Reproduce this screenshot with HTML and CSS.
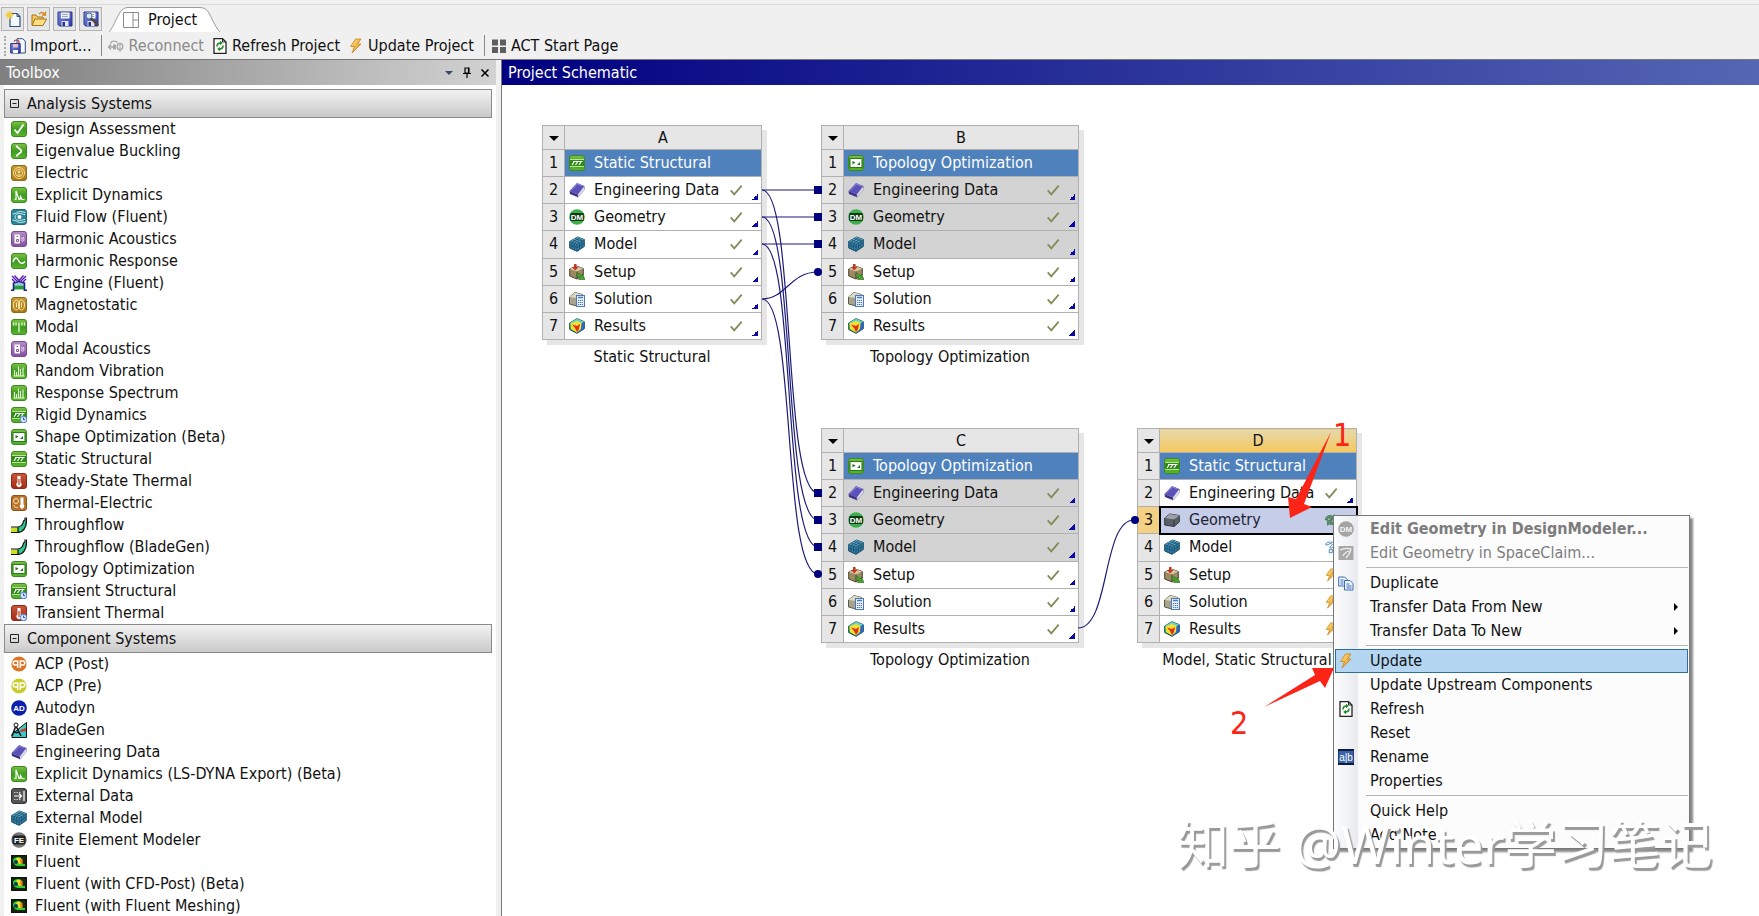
FILE: index.html
```
<!DOCTYPE html>
<html lang="en">
<head>
    <meta charset="UTF-8">
    <meta name="viewport" content="width=device-width, initial-scale=1.0">
    <title>Project Schematic</title>
    <link rel="stylesheet" href="styles.css">
</head>
<body>
    <!-- icon sprite -->
    <svg class="sprite" xmlns="http://www.w3.org/2000/svg">
        <defs>
            <linearGradient id="gGreen" x1="0" y1="0" x2="0" y2="1"><stop offset="0" stop-color="#7cc243"/><stop offset=".5" stop-color="#3f9c22"/><stop offset="1" stop-color="#5db52c"/></linearGradient>
            <linearGradient id="gGold" x1="0" y1="0" x2="0" y2="1"><stop offset="0" stop-color="#c79a3c"/><stop offset="1" stop-color="#a97a14"/></linearGradient>
            <linearGradient id="gRed" x1="0" y1="0" x2="0" y2="1"><stop offset="0" stop-color="#c9583c"/><stop offset="1" stop-color="#a32c16"/></linearGradient>
            <linearGradient id="gPurple" x1="0" y1="0" x2="0" y2="1"><stop offset="0" stop-color="#b58cc6"/><stop offset="1" stop-color="#8450a0"/></linearGradient>
            <linearGradient id="gBolt" x1="0" y1="0" x2="1" y2="1"><stop offset="0" stop-color="#ffe680"/><stop offset="1" stop-color="#e08a1a"/></linearGradient>
            <linearGradient id="gFloppy" x1="0" y1="0" x2="1" y2="1"><stop offset="0" stop-color="#7d8fe8"/><stop offset="1" stop-color="#2b3a9e"/></linearGradient>
        </defs>
        <symbol id="green" viewBox="0 0 16 16"><rect x=".5" y=".5" width="15" height="15" rx="2.5" fill="url(#gGreen)" stroke="#3c8a22"/></symbol>
        <symbol id="clock" viewBox="0 0 16 16"><circle cx="12.5" cy="12.5" r="3.2" fill="#dfeaff" stroke="#4f7fd8"/><path d="M12.5 10.6v2h1.6" fill="none" stroke="#2550b0"/></symbol>
        <symbol id="assess" viewBox="0 0 16 16"><use href="#green"/><path d="M3.5 8.5l3 3.5 6-8.5" fill="none" stroke="#fff" stroke-width="1.8"/></symbol>
        <symbol id="buckling" viewBox="0 0 16 16"><use href="#green"/><path d="M5.5 2.5c.5 3 5 3.500 5 5.500s-4.500 2.500-5 5.500" fill="none" stroke="#fff" stroke-width="1.7"/></symbol>
        <symbol id="electric" viewBox="0 0 16 16"><rect x=".5" y=".5" width="15" height="15" rx="2.500" fill="url(#gGold)" stroke="#8d6a1c"/><circle cx="8" cy="8" r="5.500" fill="none" stroke="#f7dc84"/><circle cx="8" cy="8" r="3.600" fill="#b98a26" stroke="#f7dc84"/><path d="M8 5.500v3M6.500 7h3M6.500 10h3" stroke="#fff3c0"/></symbol>
        <symbol id="explicit" viewBox="0 0 16 16"><use href="#green"/><path d="M3.500 12.500h1.500V4l3 8.500h1l.500-3 1.500 3h2.500" fill="none" stroke="#fff" stroke-width="1.200"/></symbol>
        <symbol id="fluid" viewBox="0 0 16 16"><rect x=".5" y=".5" width="15" height="15" rx="2.500" fill="#2a8496" stroke="#1d6a7a"/><path d="M1.500 5c4 0 4-2.500 8-2.500 2 0 3 1 5 1M1.500 11c4 0 4 2.500 8 2.500 2 0 3-1 5-1M4 8c0-2 2-3.500 4.500-3.500 2 0 3 1 5.500 1M4 8c0 2 2 3.500 4.500 3.500 2 0 3-1 5.500-1" fill="none" stroke="#c8f0f4"/><circle cx="8.500" cy="8" r="2" fill="#fff"/></symbol>
        <symbol id="acoustic" viewBox="0 0 16 16"><rect x=".5" y=".5" width="15" height="15" rx="2.500" fill="url(#gPurple)" stroke="#7a4a92"/><rect x="3.500" y="3.500" width="5.500" height="9" fill="#fff"/><path d="M5.500 5.500h1.500M5.500 8.500h2v2h-2z" stroke="#8a58a6" fill="none"/><path d="M11 6v4.500M12 6c1.300 1.500 1.300 3 0 4.500" fill="none" stroke="#f0dcf8"/></symbol>
        <symbol id="harmonic" viewBox="0 0 16 16"><use href="#green"/><path d="M2 9c1.500-5 4-5 5.500-1.500S12 11 14 8.500" fill="none" stroke="#fff" stroke-width="1.500"/></symbol>
        <symbol id="icengine" viewBox="0 0 16 16"><path d="M2 8h12v7H2z" fill="#fff"/><path d="M3 7.500h10v3H3z" fill="#8fc8e8"/><path d="M3 10.500h10v4H3z" fill="#2a9c3a"/><path d="M0 15.200h2.500V8L8 6.500 13.500 8v7.200H16" fill="none" stroke="#20208a" stroke-width="1.600"/><path d="M1 1l5.500 5.500M3.500.5L8 5.500M1 4l3 3M15 1L9.500 6.500M12.500.5L8 5.500M15 4l-3 3" stroke="#5a1ab0" stroke-width="1.400"/></symbol>
        <symbol id="magneto" viewBox="0 0 16 16"><rect x=".5" y=".5" width="15" height="15" rx="2.500" fill="url(#gGold)" stroke="#8d6a1c"/><g fill="none" stroke="#fbe9a8"><ellipse cx="5.500" cy="8" rx="3" ry="5"/><ellipse cx="10.500" cy="8" rx="3" ry="5"/><path d="M5.500 5.500v5M10.500 5.500v5M8 4v8"/></g></symbol>
        <symbol id="modal" viewBox="0 0 16 16"><use href="#green"/><path d="M2.500 3.500v3M5 3.500v3M8 3.500v9.500M11 3.500v3M13.500 3.500v3" stroke="#e8ffd8" stroke-width="1.300"/></symbol>
        <symbol id="spectrum" viewBox="0 0 16 16"><use href="#green"/><path d="M3.500 7v6M5.500 9v4M7.500 3.500v9.500M9.500 6v7M12 4.500v8.500" stroke="#e8ffd8" stroke-width="1.100"/><path d="M2.500 13h11" stroke="#e8ffd8"/></symbol>
        <symbol id="static" viewBox="0 0 16 16"><use href="#green"/><rect x="1" y="4.500" width="14" height="7" fill="#2f8a1c"/><path d="M1 4.500h14M1 11.500h14" stroke="#b9e88c"/><path d="M3 10l2-3M6.500 10l2-3M10 10l2-3M4 6.500h9.500" stroke="#fff" stroke-width="1.200"/></symbol>
        <symbol id="rigid" viewBox="0 0 16 16"><use href="#static"/><use href="#clock"/></symbol>
        <symbol id="topology" viewBox="0 0 16 16"><use href="#green"/><rect x="2.500" y="4" width="11" height="8" fill="#fff" stroke="#e6f6da"/><path d="M4.500 6l3 1.500-3 2zM9 10h3V7z" fill="#2c6b2c"/><rect x="2" y="3.500" width="12" height="9" fill="none" stroke="#2c7a1c"/></symbol>
        <symbol id="thermal" viewBox="0 0 16 16"><rect x=".5" y=".5" width="15" height="15" rx="2.500" fill="url(#gRed)" stroke="#8e2a16"/><path d="M6.500 3h3v6.500a2.500 2.500 0 1 1-3 0z" fill="#fff"/><path d="M8 6v6" stroke="#b03a20" stroke-width="1.200"/></symbol>
        <symbol id="transthermal" viewBox="0 0 16 16"><use href="#thermal"/><use href="#clock"/></symbol>
        <symbol id="thermelec" viewBox="0 0 16 16"><rect x=".5" y=".5" width="15" height="15" rx="2.500" fill="#b8742c" stroke="#8e5418"/><path d="M9.500 2.500h3v7a2.300 2.300 0 1 1-3 0z" fill="#fff"/><circle cx="5" cy="6" r="2.500" fill="none" stroke="#ffe2b0"/><path d="M3 10c0 3 3 3 4 2" fill="none" stroke="#ffe2b0"/></symbol>
        <symbol id="throughflow" viewBox="0 0 16 16"><path d="M0 10.500h7v5H0z" fill="#c8e020"/><path d="M7 10.500c3-.5 5-3 5.500-7H16c0 7-3 11-9 12z" fill="#2cc88c"/><path d="M0 10h7c3-.5 5-2.500 5.500-6L14 3V.5M0 15.500h7c6-.5 8.500-5 8.500-13V.5M7 10v5.500" fill="none" stroke="#111" stroke-width="1.200"/></symbol>
        <symbol id="acppost" viewBox="0 0 16 16"><circle cx="8" cy="8" r="7.600" fill="#dd7422"/><path d="M6.700 12V5H4.200a2 2 0 0 0 0 4h2M9.300 12V5h2.500a2 2 0 0 1 0 4H9.500" fill="none" stroke="#fff" stroke-width="1.500"/></symbol>
        <symbol id="acppre" viewBox="0 0 16 16"><circle cx="8" cy="8" r="7.600" fill="#c9cc28"/><path d="M6.700 12V5H4.200a2 2 0 0 0 0 4h2M9.300 12V5h2.500a2 2 0 0 1 0 4H9.500" fill="none" stroke="#fff" stroke-width="1.500"/></symbol>
        <symbol id="autodyn" viewBox="0 0 16 16"><circle cx="8" cy="8" r="7.800" fill="#0b1fae"/><text x="8" y="11" text-anchor="middle" class="glyph" fill="#fff">AD</text></symbol>
        <symbol id="bladegen" viewBox="0 0 16 16"><path d="M15.500.5v15H1V12z" fill="#3cc8c8" stroke="#111"/><path d="M9 8l6-2v3l-5 1z" fill="#d03a2a"/><circle cx="5" cy="3" r="2" fill="#fff" stroke="#111"/><path d="M4.500 5L1 14M5.500 5l4.500 9M2.500 9.500c2 1.500 4 1.500 6 0" fill="none" stroke="#111" stroke-width="1.500"/></symbol>
        <symbol id="book" viewBox="0 0 16 16"><path d="M.5 9L8 1l7.500 3L9 12.500z" fill="#5a52b8"/><path d="M2.500 8L8.500 2l5 2" fill="none" stroke="#8e88dc"/><path d="M.5 9L9 12.500v2.800L1 12z" fill="#3a3288"/><path d="M9 12.500L15.500 4v3.500L9 15.300z" fill="#e8e8f4" stroke="#8a88b0" stroke-width=".6"/></symbol>
        <symbol id="extdata" viewBox="0 0 16 16"><rect x=".5" y=".5" width="15" height="15" rx="2.500" fill="#555" stroke="#333"/><path d="M3 8h7M8 5.500L10.500 8 8 10.500M13 3v10" fill="none" stroke="#fff" stroke-width="1.200"/><path d="M3 4.500h7M3 11.500h7" stroke="#ccc" stroke-dasharray="1.500 1"/></symbol>
        <symbol id="mesh" viewBox="0 0 16 16"><path d="M.7 5.500L8.500 1l6.800 2.500v7L8 15.300.7 12z" fill="#2f7ea8" stroke="#1d4c66"/><path d="M.7 5.500L8.500 1l6.800 2.500L8 8z" fill="#5aa8cc"/><path d="M.7 5.500L8 8v7.300M8 8l7.300-4.500M.7 8.800L8 11.500l7.300-4.500M3 6.300v6.700M5.500 7.200v7M3.300 4l7.200 2.500M6 2.500l7 2.500M10.800 1.800L3 6.300M13 2.700L5.500 7.200M10.500 6.500v7M13 5v7" fill="none" stroke="#1d4c66" stroke-width=".7"/></symbol>
        <symbol id="fe" viewBox="0 0 16 16"><circle cx="8" cy="8" r="7.700" fill="#777"/><rect x="1.500" y="3.500" width="13" height="9" rx="2" fill="#222"/><text x="8" y="11" text-anchor="middle" class="glyph" fill="#fff">FE</text></symbol>
        <symbol id="fluent" viewBox="0 0 16 16"><rect x=".7" y="1.700" width="14.600" height="12.600" fill="#1a2a10" stroke="#111" stroke-width="1.400"/><path d="M2 6c2-4 8-3.500 9-1l.5 5H14v2H7C4 12 2 9 2 6z" fill="#2ed02e"/><path d="M5 5c2-2 4-1 5 0v5H8z" fill="#f4e020"/><path d="M9 5l2.500 0v5l-2 0z" fill="#f08020"/><circle cx="5" cy="8" r="2" fill="#0a3a5a"/></symbol>
        <symbol id="dm" viewBox="0 0 16 16"><circle cx="8" cy="8" r="7.800" fill="#3cae4c"/><rect x="1" y="4" width="14" height="8" rx="1.500" fill="#103a16"/><text x="8" y="11" text-anchor="middle" class="glyph" fill="#fff">DM</text></symbol>
        <symbol id="dmoff" viewBox="0 0 16 16"><circle cx="8" cy="8" r="7.800" fill="#a4a4a4"/><text x="8" y="11" text-anchor="middle" class="glyph" fill="#f4f4f4">DM</text></symbol>
        <symbol id="spaceoff" viewBox="0 0 16 16"><rect x=".5" y="1" width="15" height="14" fill="#a8a8a8"/><path d="M2 5c4-2 8-2 11-1-1 4-3 7-5 9M5 11c1-3 3-4 6-5" fill="none" stroke="#f0f0f0" stroke-width="1.300"/></symbol>
        <symbol id="box" viewBox="0 0 16 16"><path d="M.7 6l5-4 9.600 1.500V10L10 14.500.7 13z" fill="#5a5f66" stroke="#33373c"/><path d="M.7 6l5-4 9.600 1.500L10 7.500z" fill="#9aa0a8"/><path d="M10 7.500v7" stroke="#33373c"/></symbol>
        <symbol id="setup" viewBox="0 0 16 16"><path d="M.7 5L7 2l7.300 2.500V11L8 15 .7 12z" fill="#9c8a64" stroke="#4c4230"/><path d="M.7 5L7 2l7.300 2.500L8 7.500z" fill="#d8c8a0"/><path d="M8 7.500V15" stroke="#4c4230"/><path d="M5 0h2.500v3H9.500L6.200 6.500 3 3h2z" fill="#c23a26"/><path d="M8.500 9l5 3v-2l2.500 5.500h-6.500l1.500-1.500-3.500-2z" fill="#4aa030" stroke="#2a6a18" stroke-width=".6"/></symbol>
        <symbol id="solution" viewBox="0 0 16 16"><path d="M.5 6L6 1.500l7.500 2v8L8 15l-7.500-2z" fill="#a8a48c" stroke="#5c5a48"/><path d="M.5 6L6 1.500l7.500 2L8 7z" fill="#dcd8c4"/><rect x="7.500" y="4.500" width="8" height="11" fill="#e8f0fc" stroke="#4c78b8"/><path d="M9 6.500h5" stroke="#4c78b8" stroke-width="1.500"/><path d="M9 9.500h5M9 11.500h5M9 13.500h5" stroke="#4c78b8" stroke-dasharray="1.200 .7"/></symbol>
        <symbol id="results" viewBox="0 0 16 16"><path d="M.7 5L8 .7l7.300 3v7L8 15.300.7 11.500z" fill="#38b848" stroke="#1c4a5a"/><path d="M.7 5L8 .7l7.300 3L8 7.500z" fill="#6cd4c0"/><path d="M8 7.500l7.300-3.800v7L8 15.300z" fill="#2a68c8"/><path d="M1.500 5.500L8 3l4.500 2-.5 6-4 3.500-6-3.500z" fill="#f4e030"/><path d="M3 6.500l5 1.500 3-2-1 5-2 3-2-4z" fill="#e03018"/></symbol>
        <symbol id="check" viewBox="0 0 16 16"><path d="M2 8.500l4 4.500 8.500-10" fill="none" stroke="#7f8c58" stroke-width="2"/></symbol>
        <symbol id="bolt" viewBox="0 0 16 16"><path d="M7.500 1H13L9.500 6H13L4 15l2.500-6.500H2.500z" fill="url(#gBolt)" stroke="#c88420" stroke-width=".8"/></symbol>
        <symbol id="cycle" viewBox="0 0 16 16"><path d="M1.500 8C1.500 3.500 6 1.500 10 3.500L12 2v5.500H6.500L8.500 6C6 5 4.500 6 4 8zM14.500 8c0 4.500-4.500 6.500-8.500 4.500L4 14V8.500h5.500L7.500 10c2.500 1 4 0 4.500-2z" fill="#5c9468" stroke="#34613f" stroke-width=".7"/></symbol>
        <symbol id="attention" viewBox="0 0 16 16"><path d="M2 5c0-3.500 11-3.500 11 0 0 2.500-3 2.500-4 4H6.500c0-2 3-2.500 3-4S5 4 5 5.500H2zM6 11h3.500v3.500H6z" fill="#fff" stroke="#3b7cb4"/></symbol>
        <symbol id="refresh" viewBox="0 0 16 16"><path d="M2 .7h8.500L14 4v11.300H2z" fill="#fff" stroke="#222" stroke-width="1.300"/><path d="M10.500.7V4H14" fill="none" stroke="#222"/><path d="M5 8.500C5 6 6.500 5 8.500 5M11 7.500c0 2.500-1.500 3.500-3.500 3.500" fill="none" stroke="#1f8a24" stroke-width="1.600"/><path d="M8 2.800L10.800 5 8 7.300zM8 8.700L5.200 11 8 13.300z" fill="#1f8a24"/></symbol>
        <symbol id="copy" viewBox="0 0 16 16"><path d="M.7 2h6l2.500 2.500V11H.7z" fill="#eef4ff" stroke="#3e6cb4"/><path d="M6.500 5.500h5.500l3 3V15H6.500z" fill="#eef4ff" stroke="#3e6cb4"/><path d="M2.500 5h3M2.500 7h3M2.500 9h3M8.500 9h3M8.500 11h5M8.500 13h5" stroke="#3e6cb4"/></symbol>
        <symbol id="rename" viewBox="0 0 16 16"><rect x="0" y="0" width="16" height="16" fill="#0c1c40"/><rect x=".5" y="2" width="15" height="12" fill="#3b62a8"/><text x="8" y="11.500" text-anchor="middle" class="glyph thin" fill="#fff">a|b</text></symbol>
        <symbol id="new" viewBox="0 0 16 16"><path d="M5 2.500h7l3 3v10H5z" fill="#f2f8ff" stroke="#33507e" stroke-width="1.200"/><path d="M12 2.500v3h3" fill="none" stroke="#33507e"/><path d="M4.500 0v8M.5 4h8M1.700 1.200l5.600 5.600M7.300 1.200L1.700 6.800" stroke="#f0cc3a" stroke-width="1.300"/></symbol>
        <symbol id="open" viewBox="0 0 16 16"><path d="M1 14V4h4l1.500 2H12v3" fill="#f3c560" stroke="#a87418"/><path d="M1 14.500L4 8h11.500L12 14.500z" fill="#ffdf86" stroke="#a87418"/><path d="M8 3c2-2 4-2 5.500 0M14.500.5V4H11" fill="none" stroke="#d08a1c" stroke-width="1.300"/></symbol>
        <symbol id="save" viewBox="0 0 16 16"><path d="M1 1h14v14H2.500L1 13.500z" fill="url(#gFloppy)" stroke="#283484"/><rect x="4" y="1.500" width="8.500" height="6" fill="#f4f6ff"/><path d="M5 3.500h6M5 5.500h6" stroke="#9aa4c8"/><rect x="4.500" y="10" width="7" height="5" fill="#dfe3f4"/><rect x="5.500" y="11" width="2.500" height="4" fill="#283484"/></symbol>
        <symbol id="saveas" viewBox="0 0 16 16"><use href="#save"/><path d="M5.500 4.500L15 14.500" stroke="#5a4430" stroke-width="2.400"/><circle cx="6" cy="5" r="3" fill="#cfe8f4" stroke="#506080"/></symbol>
        <symbol id="import" viewBox="0 0 16 16"><path d="M7 .7h5.500L15.300 3v12H7z" fill="#f4f8ff" stroke="#33507e"/><path d="M.7 5.500h9.500v9.500H.7z" fill="url(#gFloppy)" stroke="#283484"/><rect x="3" y="6" width="5" height="3.500" fill="#e6c0c0"/><rect x="3" y="12" width="5" height="3" fill="#fff"/><path d="M4 3.500c1-2 4-2 5 0l0 2" fill="none" stroke="#b03030" stroke-width="1.200"/></symbol>
        <symbol id="reconnect" viewBox="0 0 16 16"><path d="M0 9h7M3 6.500L.5 9 3 11.500M2.500 5.500c1-3 5-3 7-1" fill="none" stroke="#a6a6a6" stroke-width="1.400"/><path d="M5 6.500h3v5H5z" fill="#a6a6a6"/><ellipse cx="12" cy="8.500" rx="2.800" ry="3.200" fill="#f0f0f0" stroke="#a6a6a6" stroke-width="1.300"/><path d="M12 5v9" stroke="#a6a6a6"/></symbol>
        <symbol id="grid" viewBox="0 0 16 16"><path d="M1 1.500h6v6H1zM9 1.500h6v6H9zM1 9h6v6H1zM9 9h6v6H9z" fill="#5e5e5e"/></symbol>
        <symbol id="layout" viewBox="0 0 16 16"><path d="M.5.5h15v15H.5zM10 .5v15M10 8h5.500" fill="#fff" stroke="#8c8c8c"/></symbol>
        <symbol id="pin" viewBox="0 0 10 12"><path d="M3 1h4v5H3zM1 6.500h8M5 7v4M6.500 1v5" fill="none" stroke="#000" stroke-width="1.200"/></symbol>
        <symbol id="close" viewBox="0 0 10 10"><path d="M1.500 1.500l7 7M8.500 1.500l-7 7" stroke="#000" stroke-width="1.500"/></symbol>
        <symbol id="collapse" viewBox="0 0 9 9"><path d="M.5.5h8v8h-8zM2.500 4.500h4" fill="none" stroke="#222"/></symbol>
    </svg>

    <div class="menustrip"></div>
    <div class="tabs">
        <button class="tool" aria-label="New"><svg class="icon"><use href="#new"/></svg></button>
        <button class="tool" aria-label="Open"><svg class="icon"><use href="#open"/></svg></button>
        <button class="tool" aria-label="Save"><svg class="icon"><use href="#save"/></svg></button>
        <button class="tool" aria-label="Save As"><svg class="icon"><use href="#saveas"/></svg></button>
        <button class="tab">
            <svg class="tab-shape" viewBox="0 0 112 25" preserveAspectRatio="none"><path d="M0 25C6 18 8 8 13 3c2-2 4-2.500 7-2.500h70c4 0 7 1 9 4 4 6 6 14 12 20.500" fill="#fff" stroke="#9a9a9a"/></svg>
            <svg class="icon"><use href="#layout"/></svg><span>Project</span>
        </button>
    </div>
    <div class="toolbar">
        <i class="grip"></i>
        <button><svg class="icon"><use href="#import"/></svg>Import...</button>
        <i class="vline"></i>
        <button disabled><svg class="icon"><use href="#reconnect"/></svg>Reconnect</button>
        <button><svg class="icon"><use href="#refresh"/></svg>Refresh Project</button>
        <button><svg class="icon"><use href="#bolt"/></svg>Update Project</button>
        <i class="vline"></i>
        <button><svg class="icon"><use href="#grid"/></svg>ACT Start Page</button>
    </div>

    <div class="main">
        <aside class="toolbox">
            <div class="panel-title">
                <span>Toolbox</span>
                <button aria-label="Menu"><i class="arrow-down"></i></button>
                <button aria-label="Auto hide"><svg class="pin"><use href="#pin"/></svg></button>
                <button aria-label="Close"><svg class="close"><use href="#close"/></svg></button>
            </div>
            <div class="groups">
                <button class="group"><svg><use href="#collapse"/></svg>Analysis Systems</button>
                <ul id="analysis"></ul>
                <button class="group"><svg><use href="#collapse"/></svg>Component Systems</button>
                <ul id="component"></ul>
            </div>
        </aside>

        <section class="schematic">
            <div class="panel-title">Project Schematic</div>
            <div class="canvas" id="canvas">
                <svg class="links" width="700" height="600">
                    <g fill="none" stroke="#1c1c78" stroke-width="1.200">
                        <path d="M260 105H316M260 132H316M260 159H316"/>
                        <path d="M260 214C284 214 288 187 316 187"/>
                        <path d="M260 105C294 105 280 408 316 408"/>
                        <path d="M260 132C294 132 280 435 316 435"/>
                        <path d="M260 159C294 159 280 462 316 462"/>
                        <path d="M260 214C294 214 280 489 316 489"/>
                        <path d="M576 543C608 543 600 435 632 435"/>
                    </g>
                    <g fill="#00007c">
                        <path d="M312 101h8v8h-8zM312 128h8v8h-8zM312 155h8v8h-8zM312 404h8v8h-8zM312 431h8v8h-8zM312 458h8v8h-8z"/>
                        <circle cx="316" cy="187" r="4"/><circle cx="316" cy="489" r="4"/><circle cx="633" cy="435" r="4"/>
                    </g>
                </svg>
            </div>

            <div class="context" role="menu">
                <button role="menuitem" class="strong" disabled><svg class="icon"><use href="#dmoff"/></svg>Edit Geometry in DesignModeler...</button>
                <button role="menuitem" disabled><svg class="icon"><use href="#spaceoff"/></svg>Edit Geometry in SpaceClaim...</button>
                <hr>
                <button role="menuitem"><svg class="icon"><use href="#copy"/></svg>Duplicate</button>
                <button role="menuitem" class="sub">Transfer Data From New</button>
                <button role="menuitem" class="sub">Transfer Data To New</button>
                <hr>
                <button role="menuitem" class="active"><svg class="icon"><use href="#bolt"/></svg>Update</button>
                <button role="menuitem">Update Upstream Components</button>
                <button role="menuitem"><svg class="icon"><use href="#refresh"/></svg>Refresh</button>
                <button role="menuitem">Reset</button>
                <button role="menuitem"><svg class="icon"><use href="#rename"/></svg>Rename</button>
                <button role="menuitem">Properties</button>
                <hr>
                <button role="menuitem">Quick Help</button>
                <button role="menuitem">Add Note</button>
            </div>

            <!-- step arrows -->
            <svg class="marks" width="900" height="720">
                <path d="M829 347L802 419L810 422L788 433L786 412L794 414Z" fill="#fb2416"/>
                <path d="M762 622L813 590L810 583L832 583L823 603L818 596Z" fill="#fb2416"/>
            </svg>
            <span class="step step1">1</span>
            <span class="step step2">2</span>
            <div class="watermark">知乎 @Winter学习笔记</div>
        </section>
    </div>

    <script>
        var analysis = [
            ["assess", "Design Assessment"], ["buckling", "Eigenvalue Buckling"], ["electric", "Electric"],
            ["explicit", "Explicit Dynamics"], ["fluid", "Fluid Flow (Fluent)"], ["acoustic", "Harmonic Acoustics"],
            ["harmonic", "Harmonic Response"], ["icengine", "IC Engine (Fluent)"], ["magneto", "Magnetostatic"],
            ["modal", "Modal"], ["acoustic", "Modal Acoustics"], ["spectrum", "Random Vibration"],
            ["spectrum", "Response Spectrum"], ["rigid", "Rigid Dynamics"], ["topology", "Shape Optimization (Beta)"],
            ["static", "Static Structural"], ["thermal", "Steady-State Thermal"], ["thermelec", "Thermal-Electric"],
            ["throughflow", "Throughflow"], ["throughflow", "Throughflow (BladeGen)"], ["topology", "Topology Optimization"],
            ["rigid", "Transient Structural"], ["transthermal", "Transient Thermal"]
        ];
        var component = [
            ["acppost", "ACP (Post)"], ["acppre", "ACP (Pre)"], ["autodyn", "Autodyn"], ["bladegen", "BladeGen"],
            ["book", "Engineering Data"], ["explicit", "Explicit Dynamics (LS-DYNA Export) (Beta)"],
            ["extdata", "External Data"], ["mesh", "External Model"], ["fe", "Finite Element Modeler"],
            ["fluent", "Fluent"], ["fluent", "Fluent (with CFD-Post) (Beta)"], ["fluent", "Fluent (with Fluent Meshing)"]
        ];
        var rows = [["book", "Engineering Data"], ["dm", "Geometry"], ["mesh", "Model"], ["setup", "Setup"], ["solution", "Solution"], ["results", "Results"]];
        var systems = [
            { id: "A", icon: "static", name: "Static Structural", caption: "Static Structural" },
            { id: "B", icon: "topology", name: "Topology Optimization", caption: "Topology Optimization", shared: 3 },
            { id: "C", icon: "topology", name: "Topology Optimization", caption: "Topology Optimization", shared: 3 },
            { id: "D", icon: "static", name: "Static Structural", caption: "Model, Static Structural", selected: 1,
              status: ["check", "cycle", "attention", "bolt", "bolt", "bolt"] }
        ];

        function icon(name) {
            return '<svg class="icon"><use href="#' + name + '"/></svg>';
        }
        function fillList(id, items) {
            document.getElementById(id).innerHTML = items.map(function(item){
                return '<li>' + icon(item[0]) + item[1] + '</li>';
            }).join("");
        }
        function systemTable(s) {
            var html = '<table><thead><tr><th><i class="arrow-down"></i></th><th>' + s.id + '</th></tr></thead><tbody>';
            html += '<tr class="name"><th>1</th><td><div>' + icon(s.icon) + '<span>' + s.name + '</span></div></td></tr>';
            rows.forEach(function(row, i){
                var cls = i < s.shared ? "shared" : i === s.selected ? "selected" : "";
                var st = s.status ? s.status[i] : "check";
                html += '<tr class="' + cls + ' ' + st + '"><th>' + (i + 2) + '</th><td><div>' + icon(i === s.selected ? "box" : row[0]) +
                    '<span>' + row[1] + '</span>' + icon(st) + '</div></td></tr>';
            });
            return '<div class="system system' + s.id + '">' + html + '</tbody></table><p>' + s.caption + '</p></div>';
        }
        fillList("analysis", analysis);
        fillList("component", component);
        document.getElementById("canvas").insertAdjacentHTML("afterbegin", systems.map(systemTable).join(""));
    </script>
</body>
</html>
```
FILE: styles.css
```
*{
    margin:0;
    padding:0;
    box-sizing:border-box;
}
body{
    height:100vh;
    display:flex;
    flex-direction:column;
    overflow:hidden;
    background:#f0f0f0;
    color:#111;
    font:16px/22px "DejaVu Sans Condensed","Noto Sans","Noto Sans CJK SC",sans-serif;
}
button{
    border:0;
    background:none;
    font:inherit;
    color:inherit;
    white-space:nowrap;
}
ul{
    list-style:none;
}
.sprite{
    position:absolute;
    width:0;
    height:0;
}
.icon{
    width:16px;
    height:16px;
    flex:none;
}
.glyph{
    font:bold 8px "Liberation Sans",sans-serif;
}
.thin{
    font-weight:normal;
    font-size:10px;
}
.arrow-down{
    display:inline-block;
    border:5px solid transparent;
    border-top-color:#000;
    border-bottom:0;
}

/* top bars */
.menustrip{
    height:5px;
    border-bottom:1px solid #dcdcdc;
    flex:none;
}
.tabs{
    display:flex;
    gap:3px;
    height:27px;
    padding:2px 1px 0;
    flex:none;
}
.tool{
    width:23px;
    height:24px;
    padding:3px;
    border:1px solid #b4b4b4;
    background:#e6e6e6;
}
.tab{
    position:relative;
    display:flex;
    align-items:center;
    gap:9px;
    width:112px;
    margin-left:4px;
    padding-left:14px;
}
.tab .icon,.tab span{
    position:relative;
}
.tab-shape{
    position:absolute;
    left:0;
    top:0;
    width:112px;
    height:25px;
}
.toolbar{
    display:flex;
    align-items:center;
    height:28px;
    padding-left:4px;
    border-bottom:1px solid #777;
    flex:none;
}
.toolbar button{
    display:flex;
    align-items:center;
    gap:4px;
    padding:0 4px;
}
.toolbar button:disabled{
    color:#8a8a8a;
}
.grip{
    width:2px;
    height:20px;
    border-left:2px dotted #aaa;
}
.vline{
    width:1px;
    height:21px;
    margin:0 2px 0 6px;
    background:#888;
}

/* panels */
.main{
    flex:1;
    display:flex;
    min-height:0;
}
.toolbox{
    width:496px;
    flex:none;
    overflow:hidden;
}
.panel-title{
    display:flex;
    align-items:center;
    height:25px;
    padding:0 6px;
    color:#fff;
}
.toolbox .panel-title{
    gap:8px;
    background:linear-gradient(90deg,#808080,#d2d2d2);
}
.toolbox .panel-title span{
    flex:1;
}
.toolbox .panel-title button{
    width:10px;
    line-height:0;
}
.toolbox .arrow-down{
    border-width:4px 4px 0;
    border-top-color:#3c4868;
}
.pin{
    width:10px;
    height:12px;
}
.close{
    width:10px;
    height:10px;
}
.groups{
    padding:4px 4px 0;
    background:linear-gradient(90deg,#f0f0f0 4px,#fff 4px);
}
.group{
    display:flex;
    align-items:center;
    gap:8px;
    width:100%;
    height:29px;
    padding-left:5px;
    border:1px solid #8a8a8a;
    background:linear-gradient(#f2f2f2,#cacaca);
}
.group svg{
    width:9px;
    height:9px;
}
.groups li{
    display:flex;
    align-items:center;
    gap:8px;
    height:22px;
    padding-left:7px;
    white-space:nowrap;
}
.schematic{
    position:relative;
    flex:1;
    min-width:0;
    margin-left:5px;
    border-left:1px solid #777;
    background:#fff;
    overflow:hidden;
}
.schematic .panel-title{
    background:linear-gradient(90deg,#000080,#5566b4);
}

/* systems on the canvas */
.canvas{
    position:relative;
}
.links{
    position:absolute;
    left:0;
    top:0;
}
.system{
    position:absolute;
    width:258px;
}
.systemA{
    left:40px;
    top:40px;
    width:220px;
}
.systemB{
    left:319px;
    top:40px;
}
.systemC{
    left:319px;
    top:343px;
}
.systemD{
    left:635px;
    top:343px;
    width:220px;
}
.system table{
    width:100%;
    height:215px;
    border-collapse:collapse;
    table-layout:fixed;
    background:#fff;
    box-shadow:5px 5px 0 #e6e6e6;
}
.system th,.system td{
    border:1px solid #b0b0b0;
    font-weight:normal;
}
.system th{
    background:#e6e6e6;
    text-align:center;
}
.system th:first-child{
    width:22px;
}
.system thead th{
    height:24px;
}
.system thead .arrow-down{
    vertical-align:middle;
}
.system td div{
    display:flex;
    align-items:center;
    padding:0 18px 0 4px;
}
.system td span{
    flex:1;
    padding-left:9px;
    white-space:nowrap;
}
.system td .icon + span + .icon{
    width:14px;
    height:14px;
}
.check td{
    background:linear-gradient(135deg,transparent 50%,#0a0aa8 50%) no-repeat right 3px bottom 3px/6px 6px;
}
.system .name td{
    background:#4f81bd;
    color:#fff;
}
.system .shared td{
    background-color:#d3d3d3;
}
.system .selected th{
    background:#f3d083;
}
.system .selected td{
    background:#c5cde8;
    color:#223;
    outline:2px solid #000;
    outline-offset:-1px;
}
.systemD thead th:last-child{
    background:linear-gradient(#e6d8ac,#f5c85c);
}
.system p{
    margin-top:6px;
    text-align:center;
}

/* context menu */
.context{
    position:absolute;
    left:831px;
    top:455px;
    width:357px;
    padding:1px;
    border:1px solid #777;
    background:linear-gradient(90deg,#fcfcfc,#e8eaee 24px,#fcfcfc 24px);
    box-shadow:3px 3px 2px #888;
}
.context button{
    position:relative;
    display:block;
    width:100%;
    height:24px;
    padding-left:35px;
    text-align:left;
}
.context button:disabled{
    color:#7c7c7c;
}
.context .icon{
    position:absolute;
    left:3px;
    top:4px;
}
.context hr{
    height:1px;
    margin:2px 0 3px 31px;
    border:0;
    background:#b4b4b4;
}
.context .strong{
    font-weight:bold;
}
.context .active{
    background:#b4d6f2;
    outline:1px solid #2f6f9c;
    outline-offset:-1px;
}
.context .sub::after{
    content:"";
    position:absolute;
    right:10px;
    top:8px;
    border:4px solid transparent;
    border-left-color:#000;
    border-right:0;
}

/* annotations */
.marks{
    position:absolute;
    left:0;
    top:25px;
    pointer-events:none;
}
.step{
    position:absolute;
    color:#fb2416;
    font-size:32px;
    line-height:40px;
}
.step1{
    left:831px;
    top:355px;
}
.step2{
    left:728px;
    top:643px;
}
.watermark{
    position:absolute;
    left:675px;
    top:749px;
    color:#fff;
    font:52px/70px "Noto Sans","Noto Sans CJK SC",sans-serif;
    white-space:nowrap;
    text-shadow:2px 3px 1px #999;
}
```
